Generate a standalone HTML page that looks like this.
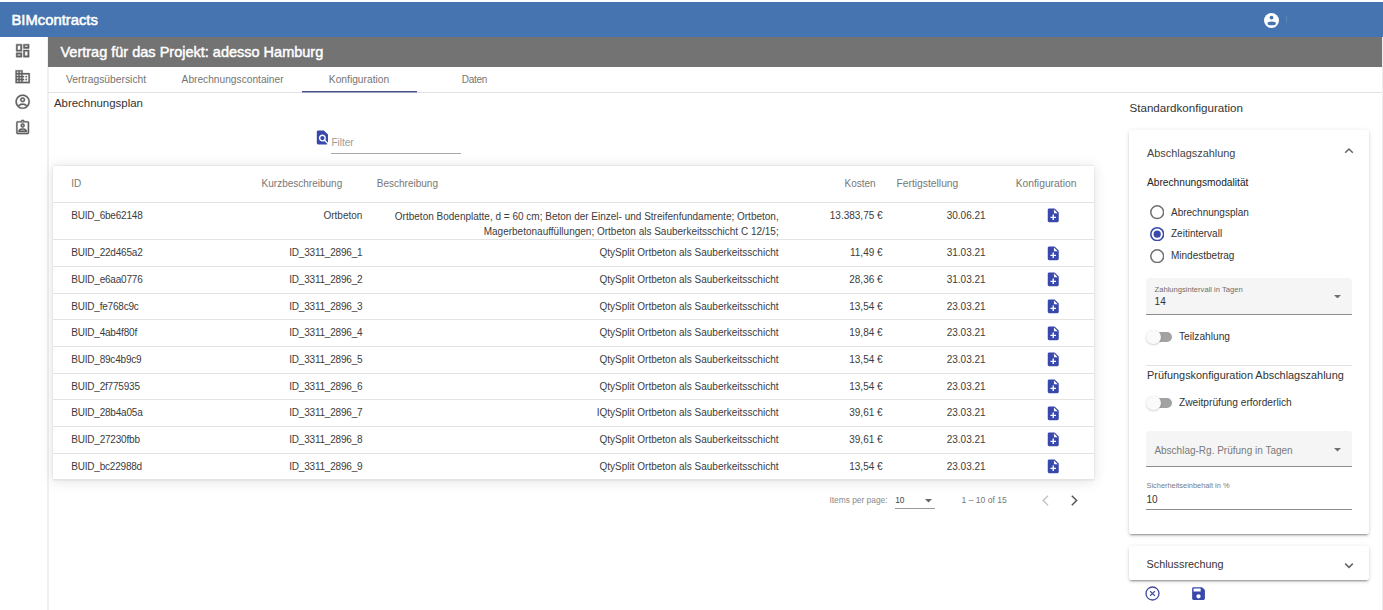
<!DOCTYPE html>
<html><head><meta charset="utf-8"><style>
html,body{margin:0;padding:0;width:1383px;height:610px;overflow:hidden;background:#fff;position:relative}
.t{position:absolute;white-space:nowrap;font-family:"Liberation Sans",sans-serif;line-height:1}
svg{display:block}
</style></head><body>
<div style="position:absolute;left:0px;top:0px;width:1383px;height:2px;background:#fff"></div>
<div style="position:absolute;left:0px;top:2px;width:1383px;height:35px;background:#4574b0"></div>
<div class="t" style="top:13px;left:11.50px;font-size:14.8px;color:#fff;-webkit-text-stroke:0.55px #fff;">BIMcontracts</div>
<div style="position:absolute;left:1286px;top:16px;width:1px;height:7px;background:rgba(255,255,255,.12)"></div>
<svg style="position:absolute;left:1264.35px;top:12.6px;width:15px;height:15px" viewBox="0 0 15 15"><circle cx="7.5" cy="7.5" r="7.5" fill="#fff"/><circle cx="7.5" cy="4.6" r="1.9" fill="#4574b0"/><ellipse cx="7.7" cy="10.4" rx="4.2" ry="1.95" fill="#4574b0"/></svg>
<div style="position:absolute;left:0px;top:37px;width:48px;height:573px;background:#fff"></div>
<div style="position:absolute;left:47px;top:37px;width:2px;height:573px;background:#f0f0f0"></div>
<svg style="position:absolute;left:13.80px;top:41.70px;width:17.30px;height:17.30px;overflow:visible" viewBox="0 0 24 24"><path fill="#616161" d="M19 5v2h-4V5h4M9 5v6H5V5h4m10 8v6h-4v-6h4M9 17v2H5v-2h4M21 3h-8v6h8V3zM11 3H3v10h8V3zm10 8h-8v10h8V11zm-10 4H3v6h8v-6z" stroke="#616161" stroke-width="0.6"/></svg>
<svg style="position:absolute;left:13.90px;top:67.90px;width:17.30px;height:17.30px;overflow:visible" viewBox="0 0 24 24"><path fill="#616161" d="M12 7V3H2v18h20V7H12zM6 19H4v-2h2v2zm0-4H4v-2h2v2zm0-4H4V9h2v2zm0-4H4V5h2v2zm4 12H8v-2h2v2zm0-4H8v-2h2v2zm0-4H8V9h2v2zm0-4H8V5h2v2zm10 12h-8v-2h2v-2h-2v-2h2v-2h-2V9h8v10zm-2-8h-2v2h2v-2zm0 4h-2v2h2v-2z" stroke="#616161" stroke-width="0.3"/></svg>
<svg style="position:absolute;left:14.00px;top:93.30px;width:17.30px;height:17.30px;overflow:visible" viewBox="0 0 24 24"><path fill="#616161" d="M12 2C6.48 2 2 6.48 2 12s4.48 10 10 10 10-4.48 10-10S17.52 2 12 2zM7.07 18.28c.43-.9 3.05-1.78 4.93-1.78s4.51.88 4.93 1.78C15.57 19.36 13.86 20 12 20s-3.57-.64-4.93-1.72zm11.29-1.45c-1.430-1.74-4.9-2.33-6.36-2.33s-4.93.59-6.36 2.33C4.62 15.49 4 13.82 4 12c0-4.41 3.59-8 8-8s8 3.59 8 8c0 1.82-.62 3.49-1.64 4.83zM12 6c-1.94 0-3.5 1.56-3.5 3.5S10.06 13 12 13s3.5-1.56 3.5-3.5S13.94 6 12 6zm0 5c-.83 0-1.5-.67-1.5-1.5S11.17 8 12 8s1.5.67 1.5 1.5S12.83 11 12 11z" stroke="#616161" stroke-width="0.3"/></svg>
<svg style="position:absolute;left:13.90px;top:119.10px;width:17.30px;height:17.30px;overflow:visible" viewBox="0 0 24 24"><path fill="#616161" d="M19 3h-4.18C14.4 1.84 13.3 1 12 1s-2.4.84-2.82 2H5c-1.1 0-2 .9-2 2v14c0 1.1.9 2 2 2h14c1.1 0 2-.9 2-2V5c0-1.1-.9-2-2-2zm-7-.25c.41 0 .75.34.75.75s-.34.75-.75.75-.75-.34-.75-.75.34-.75.75-.75zM19 19H5V5h14v14zM12 12c1.65 0 3-1.35 3-3s-1.35-3-3-3-3 1.35-3 3 1.35 3 3 3zm0-4c.55 0 1 .45 1 1s-.45 1-1 1-1-.45-1-1 .45-1 1-1zm6 8.58c0-2.5-3.97-3.58-6-3.58s-6 1.07-6 3.58V18h12v-1.42zM8.48 16c.74-.51 2.23-1 3.52-1s2.78.49 3.52 1H8.48z" stroke="#616161" stroke-width="0.3"/></svg>
<div style="position:absolute;left:48px;top:37px;width:1334px;height:29.5px;background:#737373"></div>
<div class="t" style="top:45px;left:60.50px;font-size:14.5px;color:#fff;-webkit-text-stroke:0.45px #fff;">Vertrag für das Projekt: adesso Hamburg</div>
<div style="position:absolute;left:1382px;top:37px;width:1px;height:573px;background:#eeeeee"></div>
<div style="position:absolute;left:48px;top:92px;width:1334px;height:1px;background:#e2e2e2"></div>
<div class="t" style="top:75px;left:66.00px;font-size:10.3px;color:#757575;">Vertragsübersicht</div>
<div class="t" style="top:75px;left:181.60px;font-size:10.2px;color:#757575;">Abrechnungscontainer</div>
<div class="t" style="top:75px;left:328.80px;font-size:10.25px;color:#757575;">Konfiguration</div>
<div class="t" style="top:75px;left:461.70px;font-size:10px;color:#757575;letter-spacing:-0.25px;">Daten</div>
<div style="position:absolute;left:302px;top:91px;width:115px;height:1px;background:#454e86"></div>
<div style="position:absolute;left:302px;top:92px;width:115px;height:1px;background:#9fa3c0"></div>
<div class="t" style="top:98px;left:53.90px;font-size:11.45px;color:#333;">Abrechnungsplan</div>
<svg style="position:absolute;left:313.50px;top:129.00px;width:16.80px;height:16.80px;overflow:visible" viewBox="0 0 24 24"><path fill="#3949ab" d="M20 19.59V8l-6-6H6c-1.1 0-1.99.9-1.99 2L4 20c0 1.1.89 2 1.99 2H18c.45 0 .85-.15 1.19-.4l-4.43-4.43c-.8.52-1.74.83-2.76.83-2.76 0-5-2.24-5-5s2.24-5 5-5 5 2.24 5 5c0 1.02-.31 1.96-.83 2.75L20 19.59zM9 13c0 1.66 1.34 3 3 3s3-1.34 3-3-1.34-3-3-3-3 1.34-3 3z"/></svg>
<div class="t" style="top:138px;left:331.40px;font-size:10px;color:#9a9a9a;">Filter</div>
<div style="position:absolute;left:331px;top:153px;width:130px;height:1px;background:#a8a8a8"></div>
<div style="position:absolute;left:53px;top:166px;width:1041px;height:313.6px;background:#fff;box-shadow:0 0 2px 0 rgba(0,0,0,.13),0 1px 12px 1px rgba(0,0,0,.1)"></div>
<div class="t" style="top:179px;left:71.20px;font-size:10px;color:#777;">ID</div>
<div class="t" style="top:179px;left:261.60px;font-size:10px;color:#777;">Kurzbeschreibung</div>
<div class="t" style="top:179px;left:376.80px;font-size:10px;color:#777;">Beschreibung</div>
<div class="t" style="top:179px;right:507.40px;font-size:10px;color:#777;">Kosten</div>
<div class="t" style="top:179px;left:896.50px;font-size:10.3px;color:#777;">Fertigstellung</div>
<div class="t" style="top:179px;left:1015.70px;font-size:10.3px;color:#777;">Konfiguration</div>
<div style="position:absolute;left:53px;top:202px;width:1041px;height:1px;background:#e3e3e3"></div>
<div style="position:absolute;left:53px;top:239px;width:1041px;height:1px;background:#e3e3e3"></div>
<div style="position:absolute;left:53px;top:266px;width:1041px;height:1px;background:#e3e3e3"></div>
<div style="position:absolute;left:53px;top:293px;width:1041px;height:1px;background:#e3e3e3"></div>
<div style="position:absolute;left:53px;top:319px;width:1041px;height:1px;background:#e3e3e3"></div>
<div style="position:absolute;left:53px;top:346px;width:1041px;height:1px;background:#e3e3e3"></div>
<div style="position:absolute;left:53px;top:373px;width:1041px;height:1px;background:#e3e3e3"></div>
<div style="position:absolute;left:53px;top:399px;width:1041px;height:1px;background:#e3e3e3"></div>
<div style="position:absolute;left:53px;top:426px;width:1041px;height:1px;background:#e3e3e3"></div>
<div style="position:absolute;left:53px;top:453px;width:1041px;height:1px;background:#e3e3e3"></div>
<div style="position:absolute;left:53px;top:479px;width:1041px;height:1px;background:#e3e3e3"></div>
<div class="t" style="top:211px;left:71.20px;font-size:10px;color:#3c3c3c;letter-spacing:-0.2px;">BUID_6be62148</div>
<div class="t" style="top:211px;right:1020.60px;font-size:10px;color:#3c3c3c;">Ortbeton</div>
<div class="t" style="top:212px;right:604.30px;font-size:10px;color:#3c3c3c;">Ortbeton Bodenplatte, d = 60 cm; Beton der Einzel- und Streifenfundamente; Ortbeton,</div>
<div class="t" style="top:227px;right:604.30px;font-size:10px;color:#3c3c3c;">Magerbetonauffüllungen; Ortbeton als Sauberkeitsschicht C 12/15;</div>
<div class="t" style="top:211px;right:500.40px;font-size:10px;color:#3c3c3c;">13.383,75 €</div>
<div class="t" style="top:211px;right:397.40px;font-size:10px;color:#3c3c3c;">30.06.21</div>
<svg style="position:absolute;left:1045.15px;top:207.35px;width:16.50px;height:16.50px;overflow:visible" viewBox="0 0 24 24"><path fill="#3949ab" d="M14 2H6c-1.1 0-1.99.9-1.99 2L4 20c0 1.1.89 2 1.99 2H18c1.1 0 2-.9 2-2V8l-6-6zm2 14h-3v3h-2v-3H8v-2h3v-3h2v3h3v2zm-3-7V3.5L18.5 9H13z"/></svg>
<div class="t" style="top:248px;left:71.20px;font-size:10px;color:#3c3c3c;letter-spacing:-0.2px;">BUID_22d465a2</div>
<div class="t" style="top:248px;right:1020.60px;font-size:10px;color:#3c3c3c;letter-spacing:-0.2px;">ID_3311_2896_1</div>
<div class="t" style="top:248px;right:604.50px;font-size:10px;color:#3c3c3c;">QtySplit Ortbeton als Sauberkeitsschicht</div>
<div class="t" style="top:248px;right:500.40px;font-size:10px;color:#3c3c3c;">11,49 €</div>
<div class="t" style="top:248px;right:397.40px;font-size:10px;color:#3c3c3c;">31.03.21</div>
<svg style="position:absolute;left:1045.15px;top:244.75px;width:16.50px;height:16.50px;overflow:visible" viewBox="0 0 24 24"><path fill="#3949ab" d="M14 2H6c-1.1 0-1.99.9-1.99 2L4 20c0 1.1.89 2 1.99 2H18c1.1 0 2-.9 2-2V8l-6-6zm2 14h-3v3h-2v-3H8v-2h3v-3h2v3h3v2zm-3-7V3.5L18.5 9H13z"/></svg>
<div class="t" style="top:275px;left:71.20px;font-size:10px;color:#3c3c3c;letter-spacing:-0.2px;">BUID_e6aa0776</div>
<div class="t" style="top:275px;right:1020.60px;font-size:10px;color:#3c3c3c;letter-spacing:-0.2px;">ID_3311_2896_2</div>
<div class="t" style="top:275px;right:604.50px;font-size:10px;color:#3c3c3c;">QtySplit Ortbeton als Sauberkeitsschicht</div>
<div class="t" style="top:275px;right:500.40px;font-size:10px;color:#3c3c3c;">28,36 €</div>
<div class="t" style="top:275px;right:397.40px;font-size:10px;color:#3c3c3c;">31.03.21</div>
<svg style="position:absolute;left:1045.15px;top:271.40px;width:16.50px;height:16.50px;overflow:visible" viewBox="0 0 24 24"><path fill="#3949ab" d="M14 2H6c-1.1 0-1.99.9-1.99 2L4 20c0 1.1.89 2 1.99 2H18c1.1 0 2-.9 2-2V8l-6-6zm2 14h-3v3h-2v-3H8v-2h3v-3h2v3h3v2zm-3-7V3.5L18.5 9H13z"/></svg>
<div class="t" style="top:302px;left:71.20px;font-size:10px;color:#3c3c3c;letter-spacing:-0.2px;">BUID_fe768c9c</div>
<div class="t" style="top:302px;right:1020.60px;font-size:10px;color:#3c3c3c;letter-spacing:-0.2px;">ID_3311_2896_3</div>
<div class="t" style="top:302px;right:604.50px;font-size:10px;color:#3c3c3c;">QtySplit Ortbeton als Sauberkeitsschicht</div>
<div class="t" style="top:302px;right:500.40px;font-size:10px;color:#3c3c3c;">13,54 €</div>
<div class="t" style="top:302px;right:397.40px;font-size:10px;color:#3c3c3c;">23.03.21</div>
<svg style="position:absolute;left:1045.15px;top:298.05px;width:16.50px;height:16.50px;overflow:visible" viewBox="0 0 24 24"><path fill="#3949ab" d="M14 2H6c-1.1 0-1.99.9-1.99 2L4 20c0 1.1.89 2 1.99 2H18c1.1 0 2-.9 2-2V8l-6-6zm2 14h-3v3h-2v-3H8v-2h3v-3h2v3h3v2zm-3-7V3.5L18.5 9H13z"/></svg>
<div class="t" style="top:328px;left:71.20px;font-size:10px;color:#3c3c3c;letter-spacing:-0.2px;">BUID_4ab4f80f</div>
<div class="t" style="top:328px;right:1020.60px;font-size:10px;color:#3c3c3c;letter-spacing:-0.2px;">ID_3311_2896_4</div>
<div class="t" style="top:328px;right:604.50px;font-size:10px;color:#3c3c3c;">QtySplit Ortbeton als Sauberkeitsschicht</div>
<div class="t" style="top:328px;right:500.40px;font-size:10px;color:#3c3c3c;">19,84 €</div>
<div class="t" style="top:328px;right:397.40px;font-size:10px;color:#3c3c3c;">23.03.21</div>
<svg style="position:absolute;left:1045.15px;top:324.70px;width:16.50px;height:16.50px;overflow:visible" viewBox="0 0 24 24"><path fill="#3949ab" d="M14 2H6c-1.1 0-1.99.9-1.99 2L4 20c0 1.1.89 2 1.99 2H18c1.1 0 2-.9 2-2V8l-6-6zm2 14h-3v3h-2v-3H8v-2h3v-3h2v3h3v2zm-3-7V3.5L18.5 9H13z"/></svg>
<div class="t" style="top:355px;left:71.20px;font-size:10px;color:#3c3c3c;letter-spacing:-0.2px;">BUID_89c4b9c9</div>
<div class="t" style="top:355px;right:1020.60px;font-size:10px;color:#3c3c3c;letter-spacing:-0.2px;">ID_3311_2896_5</div>
<div class="t" style="top:355px;right:604.50px;font-size:10px;color:#3c3c3c;">QtySplit Ortbeton als Sauberkeitsschicht</div>
<div class="t" style="top:355px;right:500.40px;font-size:10px;color:#3c3c3c;">13,54 €</div>
<div class="t" style="top:355px;right:397.40px;font-size:10px;color:#3c3c3c;">23.03.21</div>
<svg style="position:absolute;left:1045.15px;top:351.35px;width:16.50px;height:16.50px;overflow:visible" viewBox="0 0 24 24"><path fill="#3949ab" d="M14 2H6c-1.1 0-1.99.9-1.99 2L4 20c0 1.1.89 2 1.99 2H18c1.1 0 2-.9 2-2V8l-6-6zm2 14h-3v3h-2v-3H8v-2h3v-3h2v3h3v2zm-3-7V3.5L18.5 9H13z"/></svg>
<div class="t" style="top:382px;left:71.20px;font-size:10px;color:#3c3c3c;letter-spacing:-0.2px;">BUID_2f775935</div>
<div class="t" style="top:382px;right:1020.60px;font-size:10px;color:#3c3c3c;letter-spacing:-0.2px;">ID_3311_2896_6</div>
<div class="t" style="top:382px;right:604.50px;font-size:10px;color:#3c3c3c;">QtySplit Ortbeton als Sauberkeitsschicht</div>
<div class="t" style="top:382px;right:500.40px;font-size:10px;color:#3c3c3c;">13,54 €</div>
<div class="t" style="top:382px;right:397.40px;font-size:10px;color:#3c3c3c;">23.03.21</div>
<svg style="position:absolute;left:1045.15px;top:378.00px;width:16.50px;height:16.50px;overflow:visible" viewBox="0 0 24 24"><path fill="#3949ab" d="M14 2H6c-1.1 0-1.99.9-1.99 2L4 20c0 1.1.89 2 1.99 2H18c1.1 0 2-.9 2-2V8l-6-6zm2 14h-3v3h-2v-3H8v-2h3v-3h2v3h3v2zm-3-7V3.5L18.5 9H13z"/></svg>
<div class="t" style="top:408px;left:71.20px;font-size:10px;color:#3c3c3c;letter-spacing:-0.2px;">BUID_28b4a05a</div>
<div class="t" style="top:408px;right:1020.60px;font-size:10px;color:#3c3c3c;letter-spacing:-0.2px;">ID_3311_2896_7</div>
<div class="t" style="top:408px;right:604.50px;font-size:10px;color:#3c3c3c;">IQtySplit Ortbeton als Sauberkeitsschicht</div>
<div class="t" style="top:408px;right:500.40px;font-size:10px;color:#3c3c3c;">39,61 €</div>
<div class="t" style="top:408px;right:397.40px;font-size:10px;color:#3c3c3c;">23.03.21</div>
<svg style="position:absolute;left:1045.15px;top:404.65px;width:16.50px;height:16.50px;overflow:visible" viewBox="0 0 24 24"><path fill="#3949ab" d="M14 2H6c-1.1 0-1.99.9-1.99 2L4 20c0 1.1.89 2 1.99 2H18c1.1 0 2-.9 2-2V8l-6-6zm2 14h-3v3h-2v-3H8v-2h3v-3h2v3h3v2zm-3-7V3.5L18.5 9H13z"/></svg>
<div class="t" style="top:435px;left:71.20px;font-size:10px;color:#3c3c3c;letter-spacing:-0.2px;">BUID_27230fbb</div>
<div class="t" style="top:435px;right:1020.60px;font-size:10px;color:#3c3c3c;letter-spacing:-0.2px;">ID_3311_2896_8</div>
<div class="t" style="top:435px;right:604.50px;font-size:10px;color:#3c3c3c;">QtySplit Ortbeton als Sauberkeitsschicht</div>
<div class="t" style="top:435px;right:500.40px;font-size:10px;color:#3c3c3c;">39,61 €</div>
<div class="t" style="top:435px;right:397.40px;font-size:10px;color:#3c3c3c;">23.03.21</div>
<svg style="position:absolute;left:1045.15px;top:431.30px;width:16.50px;height:16.50px;overflow:visible" viewBox="0 0 24 24"><path fill="#3949ab" d="M14 2H6c-1.1 0-1.99.9-1.99 2L4 20c0 1.1.89 2 1.99 2H18c1.1 0 2-.9 2-2V8l-6-6zm2 14h-3v3h-2v-3H8v-2h3v-3h2v3h3v2zm-3-7V3.5L18.5 9H13z"/></svg>
<div class="t" style="top:462px;left:71.20px;font-size:10px;color:#3c3c3c;letter-spacing:-0.2px;">BUID_bc22988d</div>
<div class="t" style="top:462px;right:1020.60px;font-size:10px;color:#3c3c3c;letter-spacing:-0.2px;">ID_3311_2896_9</div>
<div class="t" style="top:462px;right:604.50px;font-size:10px;color:#3c3c3c;">QtySplit Ortbeton als Sauberkeitsschicht</div>
<div class="t" style="top:462px;right:500.40px;font-size:10px;color:#3c3c3c;">13,54 €</div>
<div class="t" style="top:462px;right:397.40px;font-size:10px;color:#3c3c3c;">23.03.21</div>
<svg style="position:absolute;left:1045.15px;top:457.95px;width:16.50px;height:16.50px;overflow:visible" viewBox="0 0 24 24"><path fill="#3949ab" d="M14 2H6c-1.1 0-1.99.9-1.99 2L4 20c0 1.1.89 2 1.99 2H18c1.1 0 2-.9 2-2V8l-6-6zm2 14h-3v3h-2v-3H8v-2h3v-3h2v3h3v2zm-3-7V3.5L18.5 9H13z"/></svg>
<div class="t" style="top:496px;left:829.40px;font-size:8.4px;color:#8a8a8a;">Items per page:</div>
<div class="t" style="top:496px;left:895.20px;font-size:8.4px;color:#444;">10</div>
<svg style="position:absolute;left:924.8px;top:499px;width:7px;height:3.5px" viewBox="0 0 10 5"><path d="M0 0l5 5 5-5z" fill="#666"/></svg>
<div style="position:absolute;left:894.6px;top:508px;width:40.2px;height:1px;background:#9a9a9a"></div>
<div class="t" style="top:496px;left:961.50px;font-size:8.6px;color:#777;">1 – 10 of 15</div>
<svg style="position:absolute;left:1040px;top:495px;width:10px;height:11px" viewBox="0 0 10 11"><path d="M8 0.8L3.2 5.5 8 10.2" fill="none" stroke="#c4c4c4" stroke-width="1.5"/></svg>
<svg style="position:absolute;left:1069.5px;top:495px;width:10px;height:11px" viewBox="0 0 10 11"><path d="M1.8 0.8L6.6 5.5 1.8 10.2" fill="none" stroke="#555" stroke-width="1.5"/></svg>
<div class="t" style="top:102px;left:1129.50px;font-size:11.6px;color:#333;">Standardkonfiguration</div>
<div style="position:absolute;left:1129px;top:130px;width:240px;height:404px;background:#fff;box-shadow:0 3px 1px -2px rgba(0,0,0,.2),0 2px 2px 0 rgba(0,0,0,.14),0 1px 5px 0 rgba(0,0,0,.12);border-radius:2.5px"></div>
<div class="t" style="top:148px;left:1147.00px;font-size:10.9px;color:#444;">Abschlagszahlung</div>
<svg style="position:absolute;left:1344px;top:146.5px;width:10px;height:7px" viewBox="0 0 10 7"><path d="M1.2 5.8L5 2 8.8 5.8" fill="none" stroke="#666" stroke-width="1.5"/></svg>
<div class="t" style="top:178px;left:1147.00px;font-size:10.2px;color:#222;">Abrechnungsmodalität</div>
<svg style="position:absolute;left:1150px;top:205.30px;width:14.4px;height:14.4px" viewBox="0 0 14.4 14.4"><circle cx="7.2" cy="7.2" r="6.4" fill="none" stroke="#707070" stroke-width="1.5"/></svg>
<div class="t" style="top:208px;left:1171.00px;font-size:10px;color:#333;">Abrechnungsplan</div>
<svg style="position:absolute;left:1150px;top:227.10px;width:14.4px;height:14.4px" viewBox="0 0 14.4 14.4"><circle cx="7.2" cy="7.2" r="6.4" fill="none" stroke="#3949ab" stroke-width="1.6"/><circle cx="7.2" cy="7.2" r="3.6" fill="#3949ab"/></svg>
<div class="t" style="top:229px;left:1171.00px;font-size:10px;color:#333;">Zeitintervall</div>
<svg style="position:absolute;left:1150px;top:248.70px;width:14.4px;height:14.4px" viewBox="0 0 14.4 14.4"><circle cx="7.2" cy="7.2" r="6.4" fill="none" stroke="#707070" stroke-width="1.5"/></svg>
<div class="t" style="top:251px;left:1171.00px;font-size:10px;color:#333;">Mindestbetrag</div>
<div style="position:absolute;left:1146.3px;top:277.5px;width:205.7px;height:37px;background:#f5f5f5;border-radius:4px 4px 0 0"></div>
<div style="position:absolute;left:1146.3px;top:314px;width:205.7px;height:1px;background:#8c8c8c"></div>
<div class="t" style="top:286px;left:1154.60px;font-size:7.6px;color:#6f6f6f;">Zahlungsintervall in Tagen</div>
<div class="t" style="top:297px;left:1154.60px;font-size:10px;color:#333;">14</div>
<svg style="position:absolute;left:1334.2px;top:294.6px;width:7px;height:3.5px" viewBox="0 0 10 5"><path d="M0 0l5 5 5-5z" fill="#707070"/></svg>
<div style="position:absolute;left:1147px;top:331.7px;width:25.4px;height:10px;background:#a2a2a2;border-radius:5px"></div>
<div style="position:absolute;left:1146.2px;top:329.5px;width:14.4px;height:14.4px;background:#fafafa;border-radius:50%;box-shadow:0 1px 2px 0 rgba(0,0,0,.16),0 0 1px 0 rgba(0,0,0,.12)"></div>
<div class="t" style="top:332px;left:1179.00px;font-size:10.2px;color:#333;">Teilzahlung</div>
<div style="position:absolute;left:1146.3px;top:365px;width:205.7px;height:1px;background:#e3e3e3"></div>
<div class="t" style="top:370px;left:1147.00px;font-size:10.9px;color:#333;">Prüfungskonfiguration Abschlagszahlung</div>
<div style="position:absolute;left:1147px;top:397.8px;width:25.4px;height:10px;background:#a2a2a2;border-radius:5px"></div>
<div style="position:absolute;left:1146.2px;top:395.6px;width:14.4px;height:14.4px;background:#fafafa;border-radius:50%;box-shadow:0 1px 2px 0 rgba(0,0,0,.16),0 0 1px 0 rgba(0,0,0,.12)"></div>
<div class="t" style="top:398px;left:1179.00px;font-size:10.2px;color:#333;">Zweitprüfung erforderlich</div>
<div style="position:absolute;left:1146.3px;top:431px;width:205.7px;height:35.5px;background:#f5f5f5;border-radius:4px 4px 0 0"></div>
<div style="position:absolute;left:1146.3px;top:466px;width:205.7px;height:1px;background:#8c8c8c"></div>
<div class="t" style="top:446px;left:1154.40px;font-size:10px;color:#7a7a7a;">Abschlag-Rg. Prüfung in Tagen</div>
<svg style="position:absolute;left:1334.4px;top:448.2px;width:7px;height:3.5px" viewBox="0 0 10 5"><path d="M0 0l5 5 5-5z" fill="#707070"/></svg>
<div class="t" style="top:482px;left:1146.50px;font-size:7.4px;color:#7a7a7a;">Sicherheitseinbehalt in %</div>
<div class="t" style="top:495px;left:1146.50px;font-size:10px;color:#333;">10</div>
<div style="position:absolute;left:1146.3px;top:509px;width:205.7px;height:1px;background:#8c8c8c"></div>
<div style="position:absolute;left:1129px;top:546.2px;width:240px;height:34.2px;background:#fff;box-shadow:0 3px 1px -2px rgba(0,0,0,.2),0 2px 2px 0 rgba(0,0,0,.14),0 1px 5px 0 rgba(0,0,0,.12);border-radius:2.5px"></div>
<div class="t" style="top:559px;left:1146.60px;font-size:10.8px;color:#333;">Schlussrechung</div>
<svg style="position:absolute;left:1344px;top:561.5px;width:10px;height:7px" viewBox="0 0 10 7"><path d="M1.2 1.6L5 5.4 8.8 1.6" fill="none" stroke="#666" stroke-width="1.5"/></svg>
<svg style="position:absolute;left:1144.95px;top:585.9px;width:15px;height:15px" viewBox="0 0 15 15"><circle cx="7.5" cy="7.5" r="6.5" fill="none" stroke="#3f4a9e" stroke-width="1.3"/><path d="M5.1 5.1L9.9 9.9M9.9 5.1L5.1 9.9" stroke="#3f4a9e" stroke-width="1.3"/></svg>
<svg style="position:absolute;left:1190.17px;top:584.87px;width:17.06px;height:17.06px;overflow:visible" viewBox="0 0 24 24"><path fill="#3949ab" d="M17 3H5c-1.11 0-2 .9-2 2v14c0 1.1.89 2 2 2h14c1.1 0 2-.9 2-2V7l-4-4zm-5 16c-1.66 0-3-1.34-3-3s1.34-3 3-3 3 1.34 3 3-1.34 3-3 3zm3-10H5V5h10v4z"/></svg>
</body></html>
